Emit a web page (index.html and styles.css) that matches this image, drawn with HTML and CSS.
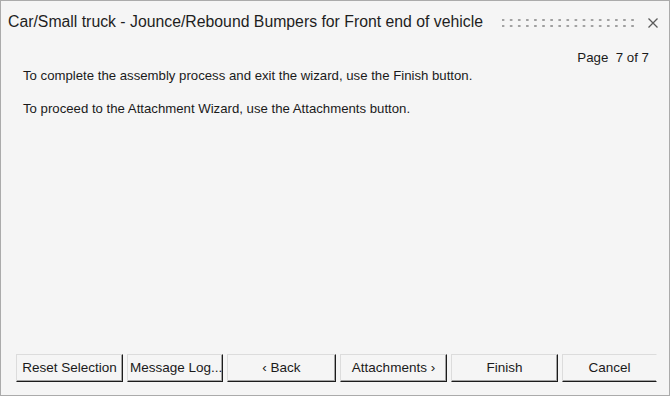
FILE: index.html
```html
<!DOCTYPE html>
<html>
<head>
<meta charset="utf-8">
<link rel="stylesheet" href="styles.css">
</head>
<body>
<div class="window">
  <div class="titlebar">
    <div class="title">Car/Small truck - Jounce/Rebound Bumpers for Front end of vehicle</div>
    <div class="grip"></div>
    <div class="close">
      <svg width="12" height="12" viewBox="0 0 12 12"><path d="M1.5 1.5 L10.5 10.5 M10.5 1.5 L1.5 10.5" stroke="#5a5a5a" stroke-width="1.3" fill="none"/></svg>
    </div>
  </div>
  <div class="content">
    <div class="page">Page&nbsp; 7 of 7</div>
    <p class="line first">To complete the assembly process and exit the wizard, use the Finish button.</p>
    <p class="line">To proceed to the Attachment Wizard, use the Attachments button.</p>
  </div>
  <div class="footer">
    <button class="btn w-reset">Reset Selection</button>
    <button class="btn w-log">Message Log...</button>
    <button class="btn w-back">&lsaquo; Back</button>
    <button class="btn w-att">Attachments &rsaquo;</button>
    <button class="btn w-fin">Finish</button>
    <button class="btn w-can">Cancel</button>
  </div>
</div>
</body>
</html>
```
FILE: styles.css
```css
html, body {
  margin: 0;
  padding: 0;
  background: #f5f5f5;
}
.window {
  width: 670px;
  height: 396px;
  box-sizing: border-box;
  border: 1px solid #ababab;
  background: #f5f5f5;
  display: flex;
  flex-direction: column;
  font-family: "Liberation Sans", Arial, sans-serif;
  color: #1a1a1a;
}
.titlebar {
  height: 43px;
  display: flex;
  align-items: center;
  padding-left: 7px;
  padding-right: 10px;
}
.title {
  font-size: 15.8px;
  color: #1e1e1e;
  white-space: nowrap;
  padding-bottom: 1px;
}
.grip {
  margin-left: 19px;
  width: 132px;
  height: 9px;
  background-image: radial-gradient(circle, #9e9e9e 1px, transparent 1.3px);
  background-size: 8.1px 6px;
  background-position: -3px -1px;
}
.close {
  margin-left: auto;
  width: 12px;
  height: 12px;
  display: flex;
}
.content {
  flex: 1;
  padding: 6px 20px 0 22px;
  font-size: 13.2px;
  color: #1a1a1a;
}
.page {
  text-align: right;
  font-size: 13.3px;
  line-height: 16px;
}
.line {
  margin: 0;
  line-height: 16px;
}
.line.first {
  margin-top: 2px;
  margin-bottom: 17px;
}
.footer {
  display: flex;
  gap: 4px;
  padding: 0 0 13px 15px;
}
.btn {
  height: 28px;
  box-sizing: border-box;
  margin: 0;
  padding: 0 2px 2px;
  background: #f5f5f5;
  border-style: solid;
  border-width: 1px;
  border-color: #dcdcdc #1c1c1c #1c1c1c #dcdcdc;
  box-shadow: inset -1px -1px 0 #a3a3a3;
  border-radius: 0;
  font-family: "Liberation Sans", Arial, sans-serif;
  font-size: 13.5px;
  color: #1a1a1a;
  white-space: nowrap;
  overflow: hidden;
}
.w-reset { width: 107px; }
.w-log { width: 96px; }
.w-back { width: 109px; }
.w-att { width: 107px; }
.w-fin { width: 107px; }
.w-can { width: 95px; border-right-color: #f5f5f5; box-shadow: inset 0 -1px 0 #a3a3a3; }
```
